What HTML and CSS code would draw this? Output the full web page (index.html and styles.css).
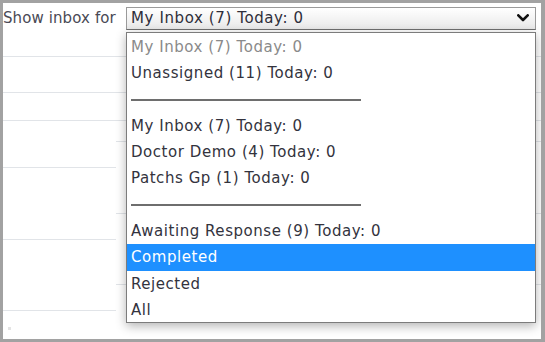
FILE: index.html
```html
<!DOCTYPE html>
<html>
<head>
<meta charset="utf-8">
<link rel="stylesheet" href="styles.css">
</head>
<body>
<div class="frame">
  <div class="toolbar">
    <span class="label">Show inbox for</span>
    <div class="select">
      <span class="value">My Inbox (7) Today: 0</span>
      <svg class="chev" width="12" height="8" viewBox="0 0 12 8"><polyline points="1.3,1.3 6,6 10.7,1.3" fill="none" stroke="#111" stroke-width="2.6" stroke-linecap="round" stroke-linejoin="round"/></svg>
    </div>
  </div>
  <div class="table">
    <div class="row r1"></div>
    <div class="row r2"></div>
    <div class="row r3"></div>
    <div class="cols">
      <div class="col left">
        <div class="cell l1"></div>
        <div class="cell l2"></div>
        <div class="cell l3"></div>
        <div class="cell l4"><span class="dot"></span></div>
      </div>
      <div class="col right">
        <div class="cell c1"></div>
        <div class="cell c2"></div>
        <div class="cell c3"></div>
      </div>
    </div>
  </div>
  <ul class="dropdown">
    <li class="opt disabled">My Inbox (7) Today: 0</li>
    <li class="opt">Unassigned (11) Today: 0</li>
    <li class="opt sep"><span class="rule"></span></li>
    <li class="opt">My Inbox (7) Today: 0</li>
    <li class="opt">Doctor Demo (4) Today: 0</li>
    <li class="opt">Patchs Gp (1) Today: 0</li>
    <li class="opt sep"><span class="rule"></span></li>
    <li class="opt">Awaiting Response (9) Today: 0</li>
    <li class="opt active">Completed</li>
    <li class="opt">Rejected</li>
    <li class="opt">All</li>
  </ul>
</div>
</body>
</html>
```
FILE: styles.css
```css
html, body {
  margin: 0;
  padding: 0;
}
body {
  background: #a2a2a2;
  width: 545px;
  height: 342px;
  overflow: hidden;
  font-family: "DejaVu Sans", "Noto Sans", sans-serif;
  font-size: 15px;
  color: #33333d;
}
.frame {
  margin: 3px 4px 0 3px;
  width: 538px;
  height: 336px;
  background: #fff;
  position: relative;
  overflow: hidden;
}
.toolbar {
  display: flex;
  align-items: center;
  height: 33px;
  box-sizing: border-box;
}
.label {
  width: 123px;
  color: #4a4a55;
  margin-top: -3px;
  letter-spacing: 0.1px;
}
.select {
  width: 410px;
  height: 23px;
  box-sizing: border-box;
  margin-top: -3px;
  border: 1px solid #9a9a9a;
  border-bottom-color: #6f6f6f;
  background: linear-gradient(#ffffff, #e9e9e9);
  display: flex;
  align-items: center;
  justify-content: space-between;
  padding: 0 6px 0 4px;
}
.value {
  color: #2e2e3a;
  letter-spacing: 0.6px;
}
.chev {
  display: block;
}
.table {
  display: flex;
  flex-direction: column;
}
.row {
  border-bottom: 1px solid #e1e4e8;
}
.r1 { height: 20px; }
.r2 { height: 35px; }
.r3 { height: 27px; }
.cols {
  display: grid;
  grid-template-columns: 113px 1fr;
}
.cell {
  border-bottom: 1px solid #e1e4e8;
}
.l1 { height: 46px; }
.l2 { height: 71px; }
.l3 { height: 70px; }
.l4 { border-bottom: none; padding: 16px 0 0 5px; }
.c1 { height: 20px; }
.c2 { height: 71px; }
.c3 { height: 70px; }
.dot {
  display: block;
  width: 3px;
  height: 3px;
  background: #e4e4e4;
}
.dropdown {
  list-style: none;
  margin: 0;
  padding: 1px 0 0;
  position: absolute;
  left: 123px;
  top: 29px;
  width: 410px;
  height: 291px;
  box-sizing: border-box;
  background: #fff;
  border: 1px solid #7c7c7c;
  box-shadow: 0 3px 10px rgba(0, 0, 0, 0.3);
}
.opt {
  height: 26.3px;
  line-height: 26px;
  padding-left: 4px;
  white-space: nowrap;
  color: #33333d;
  letter-spacing: 0.55px;
}
.opt.disabled {
  color: #8a8a8a;
}
.opt.active {
  background: #1e90ff;
  color: #fff;
}
.opt.sep {
  display: flex;
  align-items: center;
}
.rule {
  display: block;
  width: 230px;
  height: 2px;
  background: #6e6e6e;
}
```
